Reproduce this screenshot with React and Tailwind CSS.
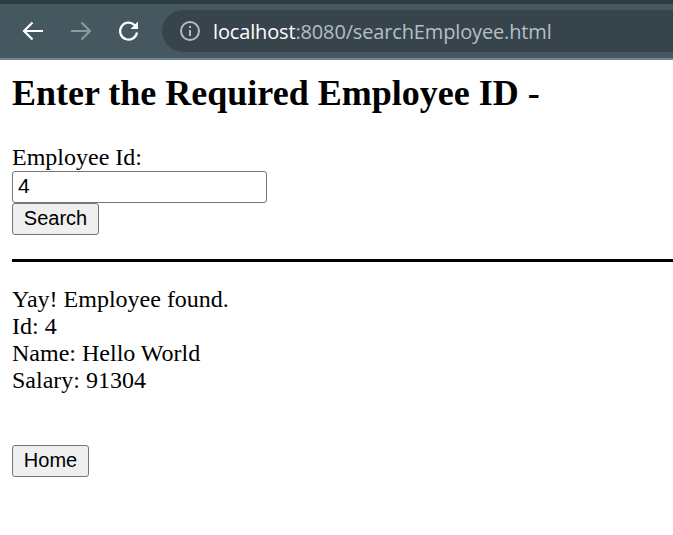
import React from 'react';

const serif = 'font-["Liberation_Serif","Times_New_Roman",serif]';

const App = () => {
  return (
    <div className="min-h-[535px] bg-white overflow-hidden">
      {/* browser toolbar */}
      <div className="h-[60px] bg-[#2f3b42] pt-1 flex flex-col">
        <div className="h-[56px] bg-[#45585f] border-b-2 border-[#72848b] pt-[6px] pl-[21px] flex items-start">
          <div className="flex items-center gap-[24px] h-[42px]">
            <svg width="24" height="24" viewBox="0 0 24 24" fill="none" stroke="#ffffff" strokeWidth="2.2">
              <path d="M22 12H3M11.5 3.5L3 12l8.5 8.5" />
            </svg>
            <svg width="24" height="24" viewBox="0 0 24 24" fill="none" stroke="#8c999e" strokeWidth="2.2">
              <path d="M2 12h19M12.5 3.5L21 12l-8.5 8.5" />
            </svg>
            <svg width="24" height="24" viewBox="0 0 24 24" fill="none" stroke="#ffffff" strokeWidth="2.2">
              <path d="M20 13.5a8.5 8.5 0 1 1-2.5-7.5L20.5 9" />
              <path d="M21 2.5V10h-7.5z" fill="#ffffff" stroke="none" />
            </svg>
          </div>
          <div className="ml-[21px] flex-1 h-[42px] bg-[#37444c] rounded-l-[21px] flex items-center pl-[17px]">
            <svg width="22" height="22" viewBox="0 0 22 22" fill="none" stroke="#b4bcc0" strokeWidth="2">
              <circle cx="11" cy="11" r="9" />
              <path d="M11 10v6M11 6v2" />
            </svg>
            <span className="ml-[12px] pt-[1px] text-[20px] leading-none font-['Open_Sans',sans-serif] tracking-[-0.15px] text-[#b4bfc4]">
              <span className="text-white">localhost</span>:8080/searchEmployee.html
            </span>
          </div>
        </div>
      </div>

      {/* page */}
      <div className={`px-3 text-black text-[24px] leading-[27px] ${serif}`}>
        <h1 className="mt-[13px] mb-[30px] text-[36px] leading-[41px] font-bold">Enter the Required Employee ID -</h1>
        <div>Employee Id:</div>
        <input
          defaultValue="4"
          className="block w-[255px] h-[32px] px-[5px] pb-[2px] border border-[#767676] rounded-[3px] text-[21px] font-['Liberation_Sans',Arial,sans-serif] outline-none"
        />
        <button className="block w-[87px] h-[32px] pb-[2px] border border-[#767676] rounded-[3px] bg-[#efefef] text-[20px] leading-none font-['Liberation_Sans',Arial,sans-serif]">
          Search
        </button>
        <hr className="-mr-3 mt-[24px] mb-[24px] border-0 h-[3px] bg-black" />
        <div>Yay! Employee found.</div>
        <div>Id: 4</div>
        <div>Name: Hello World</div>
        <div>Salary: 91304</div>
        <button className="block mt-[51px] w-[77px] h-[32px] pb-[2px] border border-[#767676] rounded-[3px] bg-[#efefef] text-[20px] leading-none font-['Liberation_Sans',Arial,sans-serif]">
          Home
        </button>
      </div>
    </div>
  );
};

export default App;
